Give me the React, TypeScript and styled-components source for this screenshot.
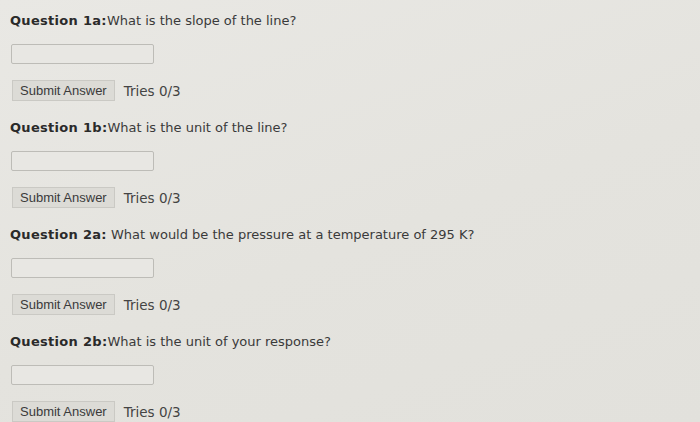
import React from 'react';
import styled, { createGlobalStyle } from 'styled-components';

const questions = [
  { label: 'Question 1a:', text: 'What is the slope of the line?' },
  { label: 'Question 1b:', text: 'What is the unit of the line?' },
  { label: 'Question 2a:', text: ' What would be the pressure at a temperature of 295 K?' },
  { label: 'Question 2b:', text: 'What is the unit of your response?' },
];

const GlobalStyle = createGlobalStyle`
  html, body {
    margin: 0;
    padding: 0;
    background: #e5e4df;
  }
`;

const Page = styled.div`
  width: 700px;
  height: 422px;
  overflow: hidden;
  box-sizing: border-box;
  padding: 13px 0 0 10px;
  background: linear-gradient(160deg, #e9e8e4 0%, #e4e3de 55%, #e2e1dc 100%);
  font-family: 'DejaVu Sans', Verdana, sans-serif;
  color: #333;
`;

const Block = styled.div`
  display: flex;
  flex-direction: column;
  align-items: flex-start;
  margin-bottom: 19px;
`;

const Prompt = styled.p`
  margin: 0 0 15px;
  font-size: 13px;
  line-height: 16px;
  color: #3a3a3a;
  white-space: pre;

  > b {
    color: #2a2a2a;
    font-weight: bold;
    letter-spacing: 0.3px;
  }
`;

const AnswerInput = styled.input`
  box-sizing: border-box;
  width: 143px;
  height: 20px;
  margin: 0 0 16px 1px;
  border: 1px solid #bdbcb7;
  border-radius: 2px;
  background: #e8e7e3;
  outline: none;
`;

const SubmitRow = styled.div`
  display: flex;
  align-items: center;
  gap: 9px;
`;

const SubmitButton = styled.button`
  box-sizing: border-box;
  height: 21px;
  padding: 0 7px;
  margin-left: 2px;
  border: 1px solid #cac9c4;
  background: #dcdbd6;
  font-family: 'Liberation Sans', Arial, sans-serif;
  font-size: 13px;
  color: #3a3a3a;
`;

const Tries = styled.span`
  font-size: 13.5px;
  color: #444;
`;

export default function App() {
  return (
    <>
      <GlobalStyle />
      <Page>
        {questions.map((q) => (
          <Block key={q.label}>
            <Prompt>
              <b>{q.label}</b>
              {q.text}
            </Prompt>
            <AnswerInput type="text" />
            <SubmitRow>
              <SubmitButton>Submit Answer</SubmitButton>
              <Tries>Tries 0/3</Tries>
            </SubmitRow>
          </Block>
        ))}
      </Page>
    </>
  );
}
